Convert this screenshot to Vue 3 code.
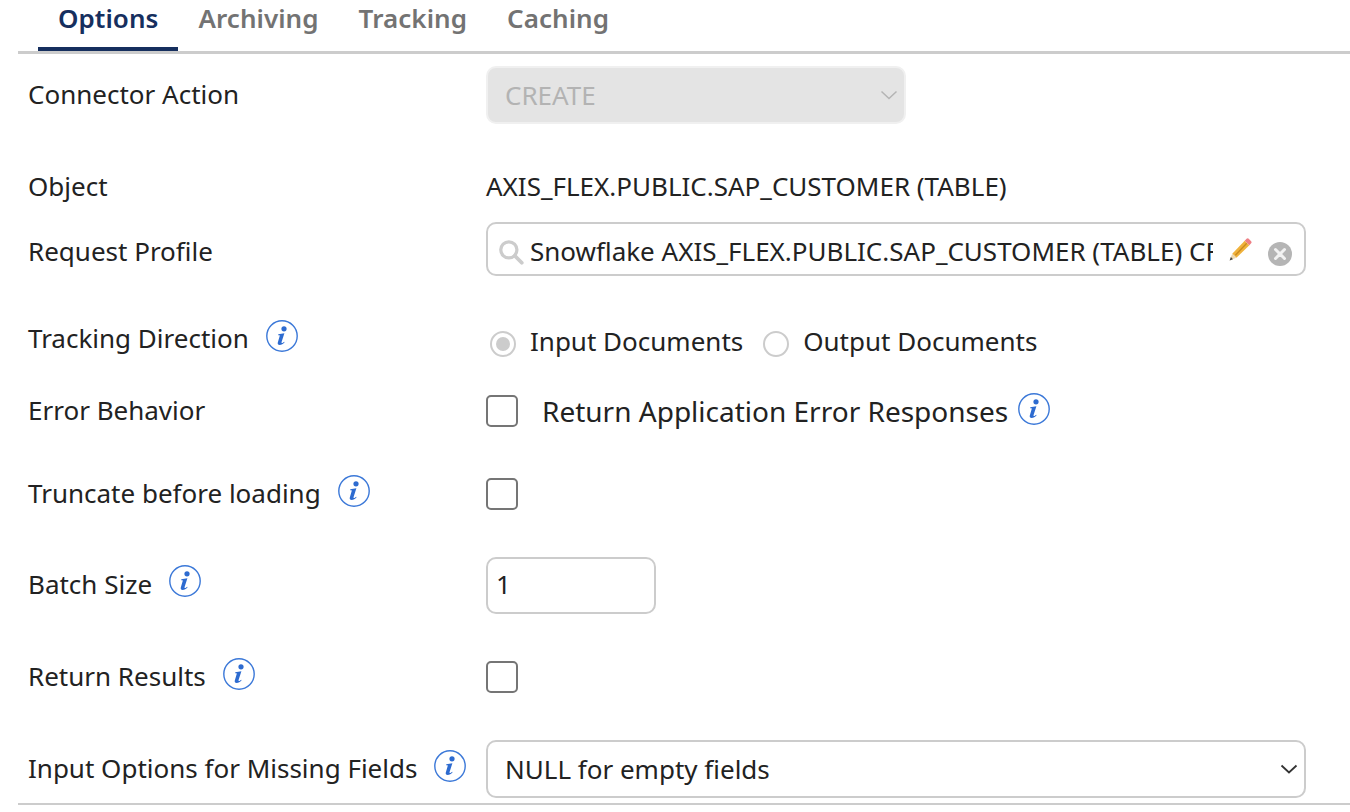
<template>
  <div class="panel">
    <div class="tabs">
      <div v-for="tab in tabs" :key="tab" class="tab" :class="{ active: tab === 'Options' }">{{ tab }}</div>
    </div>

    <div class="form">
      <div class="row row-action">
        <div class="label">Connector Action</div>
        <div class="select disabled">
          <span>CREATE</span>
          <svg class="chevron" width="18" height="10" viewBox="0 0 18 10">
            <path d="M1.500 1.500 9 8.500l7.500-7" fill="none" stroke="#b4b4b4" stroke-width="1.500" />
          </svg>
        </div>
      </div>

      <div class="row row-object">
        <div class="label">Object</div>
        <div class="value">AXIS_FLEX.PUBLIC.SAP_CUSTOMER (TABLE)</div>
      </div>

      <div class="row row-profile">
        <div class="label">Request Profile</div>
        <div class="lookup">
          <svg class="search" width="28" height="28" viewBox="0 0 26 26">
            <circle cx="11" cy="11" r="7.500" fill="none" stroke="#cccccc" stroke-width="3" />
            <path d="M16.500 16.500 23 23" stroke="#cccccc" stroke-width="3.500" stroke-linecap="round" />
          </svg>
          <div class="lookup-text">Snowflake AXIS_FLEX.PUBLIC.SAP_CUSTOMER (TABLE) CREATE Request</div>
          <div class="lookup-actions">
            <svg class="pencil" width="27" height="27" viewBox="0 0 26 26">
              <path d="M6 17 18 4.500l4.500 4.500L10 21z" fill="#f0b23c" />
              <path d="M9 18.500 20 7" stroke="#c98a1f" stroke-width="1.300" />
              <path d="M18 4.500l1.800-1.800a1.500 1.500 0 0 1 2.100 0l2.300 2.300a1.500 1.500 0 0 1 0 2.100L22.500 9z" fill="#ee7f85" />
              <path d="M6 17l-2.500 6.500L10 21z" fill="#ecd9b4" />
              <path d="M4.700 20.300l-1.200 3.200 3.200-1.200z" fill="#444444" />
            </svg>
            <svg class="clear" width="26" height="26" viewBox="0 0 26 26">
              <circle cx="13" cy="13" r="12" fill="#b5b5b5" />
              <path d="M8.500 8.500l9 9m0-9-9 9" stroke="#f2f2f2" stroke-width="3" stroke-linecap="round" />
            </svg>
          </div>
        </div>
      </div>

      <div class="row row-direction">
        <div class="label">Tracking Direction
          <svg class="info" viewBox="0 0 32 32"><use href="#info-i" /></svg>
        </div>
        <div class="radios">
          <label class="radio checked"><span class="dot"></span><span class="radio-text">Input Documents</span></label>
          <label class="radio"><span class="dot"></span><span class="radio-text">Output Documents</span></label>
        </div>
      </div>

      <div class="row row-error">
        <div class="label">Error Behavior</div>
        <div class="check-line">
          <span class="checkbox"></span>
          <span class="check-text">Return Application Error Responses</span>
          <svg class="info" viewBox="0 0 32 32"><use href="#info-i" /></svg>
        </div>
      </div>

      <div class="row row-truncate">
        <div class="label">Truncate before loading
          <svg class="info" viewBox="0 0 32 32"><use href="#info-i" /></svg>
        </div>
        <span class="checkbox"></span>
      </div>

      <div class="row row-batch">
        <div class="label">Batch Size
          <svg class="info" viewBox="0 0 32 32"><use href="#info-i" /></svg>
        </div>
        <div class="number">1</div>
      </div>

      <div class="row row-results">
        <div class="label">Return Results
          <svg class="info" viewBox="0 0 32 32"><use href="#info-i" /></svg>
        </div>
        <span class="checkbox"></span>
      </div>

      <div class="row row-missing">
        <div class="label">Input Options for Missing Fields
          <svg class="info" viewBox="0 0 32 32"><use href="#info-i" /></svg>
        </div>
        <div class="select">
          <span>NULL for empty fields</span>
          <svg class="chevron" width="18" height="10" viewBox="0 0 18 10">
            <path d="M1.500 1.500 9 8.500l7.500-7" fill="none" stroke="#333333" stroke-width="1.800" />
          </svg>
        </div>
      </div>
    </div>

    <svg width="0" height="0" class="defs">
      <symbol id="info-i" viewBox="0 0 32 32">
        <circle cx="16" cy="16" r="15.200" fill="none" stroke="#3b78d8" stroke-width="1.400" />
        <circle cx="18" cy="8.800" r="2.600" fill="#2d6bd0" />
        <path d="M12.300 14.200 18.400 13.200 15.500 22.300c-.2.700.4 1 1 .6l1.700-1.200.4.600c-1.600 1.700-3.200 2.600-4.900 2.600-1.600 0-2.300-.9-1.900-2.400l1.900-6.400c.2-.7 0-.9-.6-.9l-.9.1z" fill="#2d6bd0" />
      </symbol>
    </svg>
  </div>
</template>

<script setup>
const tabs = ["Options", "Archiving", "Tracking", "Caching"];
</script>

<style>
html,
body {
  margin: 0;
  background: #fff;
}
</style>

<style scoped>
.panel {
  width: 1350px;
  height: 812px;
  overflow: hidden;
  font-family: "Noto Sans", sans-serif;
  font-size: 26px;
  line-height: 30px;
  color: #222;
  background: #fff;
}

.tabs {
  display: flex;
  margin-left: 18px;
  padding-left: 20px;
  height: 51px;
  border-bottom: 3px solid #cccccc;
}

.tab {
  padding: 0 20px;
  height: 51px;
  line-height: 36px;
  letter-spacing: 0.05px;
  font-weight: 600;
  color: #737373;
  box-sizing: border-box;
}

.tab.active {
  color: #162f5e;
  border-bottom: 4px solid #162f5e;
}

.form {
  margin-left: 18px;
  padding: 12px 44px 5px 10px;
  border-bottom: 2px solid #cccccc;
}

.row {
  display: grid;
  grid-template-columns: 458px 820px;
  align-items: center;
}

.label {
  display: flex;
  align-items: center;
  white-space: nowrap;
  padding-bottom: 2px;
}

.row-action { height: 58px; }
.row-object { height: 34px; margin-top: 46px; }
.row-profile { height: 54px; margin-top: 18px; }
.row-direction { height: 38px; margin-top: 47px; }
.row-error { height: 32px; margin-top: 34px; }
.row-truncate { height: 32px; margin-top: 51px; }
.row-batch { height: 57px; margin-top: 47px; }
.row-results { height: 32px; margin-top: 47px; }
.row-missing { height: 58px; margin-top: 47px; }

.row-profile .label {
  padding: 3px 0 0;
}

.row-direction .label {
  padding-bottom: 8px;
}

.row-batch .label {
  padding-bottom: 4px;
}

.value {
  padding-bottom: 2px;
}

.info {
  width: 32px;
  height: 32px;
  margin: -5px 0 0 17px;
  flex: none;
}

.defs {
  position: absolute;
}

.select {
  height: 58px;
  box-sizing: border-box;
  display: flex;
  align-items: center;
  justify-content: space-between;
  padding: 0 6px 0 17px;
  border: 2px solid #cccccc;
  border-radius: 10px;
}

.select.disabled {
  width: 420px;
  background: #e4e4e4;
  border: 2px solid #f0f0f0;
  color: #b3b3b3;
}

.chevron {
  flex: none;
}

.lookup {
  position: relative;
  height: 54px;
  box-sizing: border-box;
  display: flex;
  align-items: center;
  padding-left: 9px;
  border: 2px solid #cccccc;
  border-radius: 10px;
}

.search {
  flex: none;
  margin-top: 5px;
}

.lookup-text {
  margin-left: 5px;
  padding-top: 4px;
  width: 683px;
  overflow: hidden;
  white-space: nowrap;
}

.lookup-actions {
  position: absolute;
  left: 725px;
  right: 11px;
  top: 0;
  bottom: 0;
  padding-left: 13px;
  display: flex;
  align-items: center;
  gap: 14px;
}

.pencil {
  flex: none;
}

.clear {
  flex: none;
  margin-top: 9px;
}

.radios {
  display: flex;
  gap: 20px;
  padding-left: 4px;
  align-self: stretch;
}

.radio {
  display: flex;
  align-items: flex-start;
}

.radio-text {
  margin-top: 3px;
}

.dot {
  position: relative;
  width: 26px;
  height: 26px;
  box-sizing: border-box;
  margin: 8px 14px 0 0;
  border: 2px solid #cccccc;
  border-radius: 50%;
}

.radio.checked .dot::after {
  content: "";
  position: absolute;
  inset: 4px;
  border-radius: 50%;
  background: #cccccc;
}

.check-line {
  display: flex;
  align-items: center;
}

.check-text {
  margin-left: 24px;
  font-size: 28px;
}

.check-line .info {
  margin: -4px 0 0 10px;
}

.checkbox {
  display: block;
  width: 32px;
  height: 32px;
  box-sizing: border-box;
  border: 2px solid #757575;
  border-radius: 5px;
  flex: none;
}

.number {
  width: 170px;
  height: 57px;
  box-sizing: border-box;
  display: flex;
  align-items: center;
  padding: 0 0 4px 8px;
  border: 2px solid #cccccc;
  border-radius: 10px;
}
</style>
